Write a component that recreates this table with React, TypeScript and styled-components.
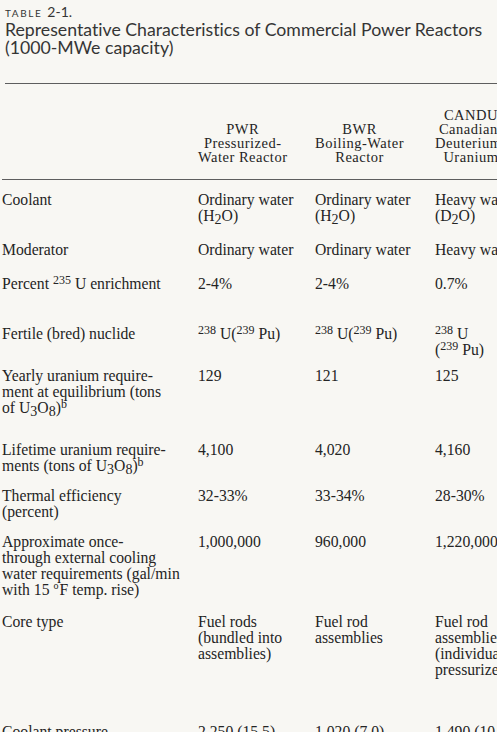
import * as React from 'react';
import styled, { createGlobalStyle } from 'styled-components';

const GlobalStyle = createGlobalStyle`
  html,
  body {
    margin: 0;
    padding: 0;
    overflow: hidden;
    background-color: #f8f7f3;
  }
`;

const Page = styled.div`
  width: 600px;
  height: 732px;
  overflow: hidden;
  box-sizing: border-box;
  padding-top: 4px;
  color: #242424;
`;

const Caption = styled.header`
  padding-left: 5px;
  font-family: Lato, 'Open Sans', sans-serif;
  font-variant-ligatures: none;
  color: #353535;
`;

const TableNo = styled.div`
  font-size: 14px;
  line-height: 16px;
`;

const SmallCaps = styled.span`
  font-size: 10px;
  letter-spacing: 1.6px;
  margin-right: 5px;
`;

const Title = styled.h1`
  margin: 0;
  font-weight: 400;
  font-size: 17.7px;
  line-height: 17.5px;
`;

const Rule = styled.hr<{ $top: number; $left: number }>`
  margin: ${(p) => p.$top}px 0 0 ${(p) => p.$left}px;
  height: 0;
  border: 0;
  border-top: 1.5px solid #5e5e5e;
`;

const Grid = styled.div`
  display: grid;
  grid-template-columns: 196px 117px 120px 160px;
  padding-left: 2px;
  font-family: 'Liberation Serif', 'Times New Roman', serif;
`;

const HeadRow = styled(Grid)`
  margin-top: 24px;
  padding-bottom: 15px;
  align-items: end;
  font-size: 14.5px;
  letter-spacing: 0.5px;
  line-height: 14px;
`;

const HeadCell = styled.div`
  justify-self: start;
  display: flex;
  flex-direction: column;
  align-items: center;
  white-space: nowrap;
`;

const Row = styled(Grid)<{ $space: number }>`
  margin-top: ${(p) => p.$space}px;
  align-items: start;
  font-size: 15.7px;
  line-height: 16px;
`;

const Cell = styled.div`
  white-space: nowrap;
`;

const Sup = styled.sup`
  font-size: 12px;
  line-height: 0;
  vertical-align: 5px;
`;

const Sub = styled.sub`
  font-size: 14px;
  line-height: 0;
  vertical-align: -3px;
`;

const Deg = styled.sup`
  font-size: 10px;
  line-height: 0;
  vertical-align: 6px;
  margin: 0 1px 0 4px;
`;

const U3O8 = () => (
  <>
    U<Sub>3</Sub>O<Sub>8</Sub>)<Sup>b</Sup>
  </>
);

const Bred = () => (
  <>
    <Sup>238</Sup> U(<Sup>239</Sup> Pu)
  </>
);

interface RowData {
  space: number;
  label: React.ReactNode;
  values: React.ReactNode[];
}

const rows: RowData[] = [
  {
    space: 11.5,
    label: 'Coolant',
    values: [
      <>Ordinary water<br />(H<Sub>2</Sub>O)</>,
      <>Ordinary water<br />(H<Sub>2</Sub>O)</>,
      <>Heavy water<br />(D<Sub>2</Sub>O)</>,
    ],
  },
  {
    space: 18,
    label: 'Moderator',
    values: ['Ordinary water', 'Ordinary water', 'Heavy water'],
  },
  {
    space: 18,
    label: <>Percent <Sup>235</Sup> U enrichment</>,
    values: ['2-4%', '2-4%', '0.7%'],
  },
  {
    space: 34,
    label: 'Fertile (bred) nuclide',
    values: [<Bred />, <Bred />, <><Sup>238</Sup> U<br />(<Sup>239</Sup> Pu)</>],
  },
  {
    space: 10,
    label: <>Yearly uranium require-<br />ment at equilibrium (tons<br />of <U3O8 /></>,
    values: ['129', '121', '125'],
  },
  {
    space: 26,
    label: <>Lifetime uranium require-<br />ments (tons of <U3O8 /></>,
    values: ['4,100', '4,020', '4,160'],
  },
  {
    space: 14,
    label: <>Thermal efficiency<br />(percent)</>,
    values: ['32-33%', '33-34%', '28-30%'],
  },
  {
    space: 14,
    label: (
      <>
        Approximate once-<br />through external cooling<br />water requirements (gal/min
        <br />with 15<Deg>o</Deg>F temp. rise)
      </>
    ),
    values: ['1,000,000', '960,000', '1,220,000'],
  },
  {
    space: 16,
    label: 'Core type',
    values: [
      <>Fuel rods<br />(bundled into<br />assemblies)</>,
      <>Fuel rod<br />assemblies</>,
      <>Fuel rod<br />assemblies<br />(individually<br />pressurized)</>,
    ],
  },
  {
    space: 46,
    label: <>Coolant pressure,<br />psi (MPa)</>,
    values: ['2,250 (15.5)', '1,020 (7.0)', '1,490 (10.3)'],
  },
];

const App: React.FC = () => {
  return (
    <Page>
      <GlobalStyle />
      <Caption>
        <TableNo>
          <SmallCaps>TABLE</SmallCaps>2-1.
        </TableNo>
        <Title>
          Representative Characteristics of Commercial Power Reactors
          <br />
          (1000-MWe capacity)
        </Title>
      </Caption>
      <Rule $top={27} $left={5} />

      <HeadRow>
        <div />
        <HeadCell>
          <span>PWR</span>
          <span>Pressurized-</span>
          <span>Water Reactor</span>
        </HeadCell>
        <HeadCell>
          <span>BWR</span>
          <span>Boiling-Water</span>
          <span>Reactor</span>
        </HeadCell>
        <HeadCell>
          <span>CANDU</span>
          <span>Canadian-</span>
          <span>Deuterium-</span>
          <span>Uranium</span>
        </HeadCell>
      </HeadRow>
      <Rule $top={0} $left={2} />

      {rows.map((row, i) => (
        <Row key={i} $space={row.space}>
          <Cell>{row.label}</Cell>
          {row.values.map((v, j) => (
            <Cell key={j}>{v}</Cell>
          ))}
        </Row>
      ))}
    </Page>
  );
};

export default App;
